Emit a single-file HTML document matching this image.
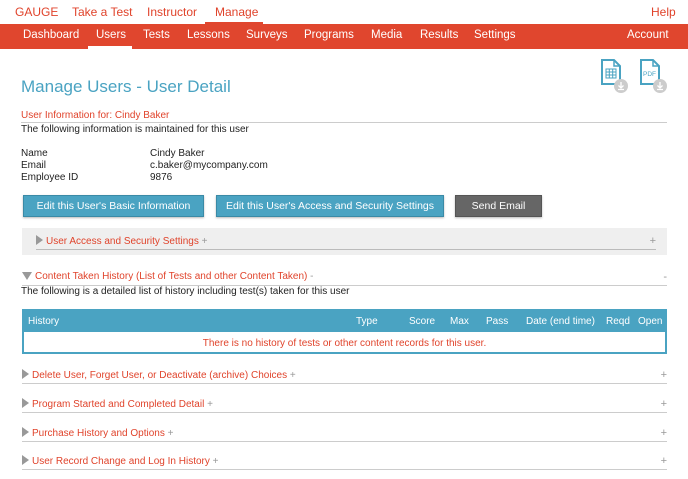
<!DOCTYPE html>
<html><head><meta charset="utf-8"><style>
*{margin:0;padding:0;box-sizing:border-box}
body{width:688px;height:479px;overflow:hidden;background:#fff;font-family:"Liberation Sans",sans-serif;font-size:10px;color:#222;position:relative}
.a{position:absolute;white-space:nowrap}
.top{height:24px;position:relative}
.top span{position:absolute;top:5px;font-size:12px;color:#e0432b}
.nav{position:absolute;top:24px;left:0;width:688px;height:25px;background:#e0462e}
.nav span{position:absolute;top:5px;color:#fff;font-size:11.5px}
.red{color:#e0432b}
.btn{position:absolute;top:195px;height:22px;color:#fff;font-size:10.5px;text-align:center;line-height:21px;background:#4aa3c2;border:1px solid #3a8aa6;box-shadow:0 1px 2px #bbb}
.sec{position:absolute;left:22px;width:645px;border-bottom:1px solid #ccc;height:15px;font-size:10px;color:#e0432b}
.sec b{font-weight:normal;color:#999}
.tri{display:inline-block;width:0;height:0;border-left:7px solid #999;border-top:5px solid transparent;border-bottom:5px solid transparent;margin-right:3px;vertical-align:-1px}
.plus{position:absolute;right:0;top:0;color:#999;font-size:11px}
</style></head><body>
<div class="top">
<span style="left:15px">GAUGE</span><span style="left:72px">Take a Test</span><span style="left:147px">Instructor</span><span style="left:215px">Manage</span><span style="left:651px">Help</span>
<div style="position:absolute;left:205px;top:22px;width:58px;height:2px;background:#e0462e"></div>
</div>
<div class="nav">
<span style="left:23px">Dashboard</span><span style="left:96px">Users</span><span style="left:143px">Tests</span><span style="left:187px">Lessons</span><span style="left:246px">Surveys</span><span style="left:304px">Programs</span><span style="left:371px">Media</span><span style="left:420px">Results</span><span style="left:474px">Settings</span><span style="left:627px">Account</span>
<div style="position:absolute;left:88px;top:22px;width:44px;height:3px;background:#fff"></div>
</div>
<div class="a" style="left:21px;top:77px;font-size:17px;color:#4aa3c2">Manage Users - User Detail</div>
<svg class="a" style="left:600px;top:58px" width="30" height="36" viewBox="0 0 30 36"><path d="M2 2h12l6 6v18H2z" fill="none" stroke="#4aa3c2" stroke-width="2"/><path d="M14 2v6h6" fill="none" stroke="#4aa3c2" stroke-width="1.5"/><rect x="6" y="11" width="10" height="9" fill="none" stroke="#4aa3c2"/><path d="M6 14h10M6 17h10M9.3 11v9M12.7 11v9" stroke="#4aa3c2"/><circle cx="21" cy="28" r="7" fill="#ccc"/><path d="M21 24v6M18.5 27.5l2.5 2.5 2.5-2.5M18 31.5h6" stroke="#fff" fill="none" stroke-width="1.3"/></svg>
<svg class="a" style="left:639px;top:58px" width="30" height="36" viewBox="0 0 30 36"><path d="M2 2h12l6 6v18H2z" fill="none" stroke="#4aa3c2" stroke-width="2"/><path d="M14 2v6h6" fill="none" stroke="#4aa3c2" stroke-width="1.5"/><text x="4" y="18" font-size="6.5" fill="#4aa3c2" font-family="Liberation Sans">PDF</text><circle cx="21" cy="28" r="7" fill="#ccc"/><path d="M21 24v6M18.5 27.5l2.5 2.5 2.5-2.5M18 31.5h6" stroke="#fff" fill="none" stroke-width="1.3"/></svg>
<div class="a red" style="left:21px;top:110px;width:646px;border-bottom:1px solid #ccc;height:13px;font-size:10px">User Information for: Cindy Baker</div>
<div class="a" style="left:21px;top:124px">The following information is maintained for this user</div>
<div class="a" style="left:21px;top:148px;line-height:12px">Name<br>Email<br>Employee ID</div>
<div class="a" style="left:150px;top:148px;line-height:12px">Cindy Baker<br>c.baker@mycompany.com<br>9876</div>
<div class="btn" style="left:23px;width:181px">Edit this User's Basic Information</div>
<div class="btn" style="left:216px;width:228px">Edit this User's Access and Security Settings</div>
<div class="btn" style="left:455px;width:87px;background:#666;border-color:#555">Send Email</div>
<div class="a" style="left:22px;top:228px;width:645px;height:27px;background:#efefef"></div>
<div class="sec" style="left:36px;top:235px;width:620px;border-bottom-color:#bbb"><span class="tri"></span>User Access and Security Settings <b>+</b><span class="plus">+</span></div>
<div class="sec" style="top:271px"><span class="tri" style="border-left:5px solid transparent;border-right:5px solid transparent;border-top:8px solid #999;border-bottom:0"></span>Content Taken History (List of Tests and other Content Taken) <b>-</b><span class="plus">-</span></div>
<div class="a" style="left:21px;top:286px">The following is a detailed list of history including test(s) taken for this user</div>
<div class="a" style="left:22px;top:309px;width:645px;height:45px;border:2px solid #4aa3c2">
<div style="height:21px;background:#4aa3c2;color:#fff;position:relative">
<span class="a" style="left:4px;top:5px">History</span><span class="a" style="left:332px;top:5px">Type</span><span class="a" style="left:385px;top:5px">Score</span><span class="a" style="left:426px;top:5px">Max</span><span class="a" style="left:462px;top:5px">Pass</span><span class="a" style="left:502px;top:5px">Date (end time)</span><span class="a" style="left:582px;top:5px">Reqd</span><span class="a" style="left:614px;top:5px">Open</span></div>
<div style="text-align:center;color:#e0432b;padding-top:6px">There is no history of tests or other content records for this user.</div>
</div>
<div class="sec" style="top:369px"><span class="tri"></span>Delete User, Forget User, or Deactivate (archive) Choices <b>+</b><span class="plus">+</span></div>
<div class="sec" style="top:398px"><span class="tri"></span>Program Started and Completed Detail <b>+</b><span class="plus">+</span></div>
<div class="sec" style="top:427px"><span class="tri"></span>Purchase History and Options <b>+</b><span class="plus">+</span></div>
<div class="sec" style="top:455px"><span class="tri"></span>User Record Change and Log In History <b>+</b><span class="plus">+</span></div>
</body></html>
